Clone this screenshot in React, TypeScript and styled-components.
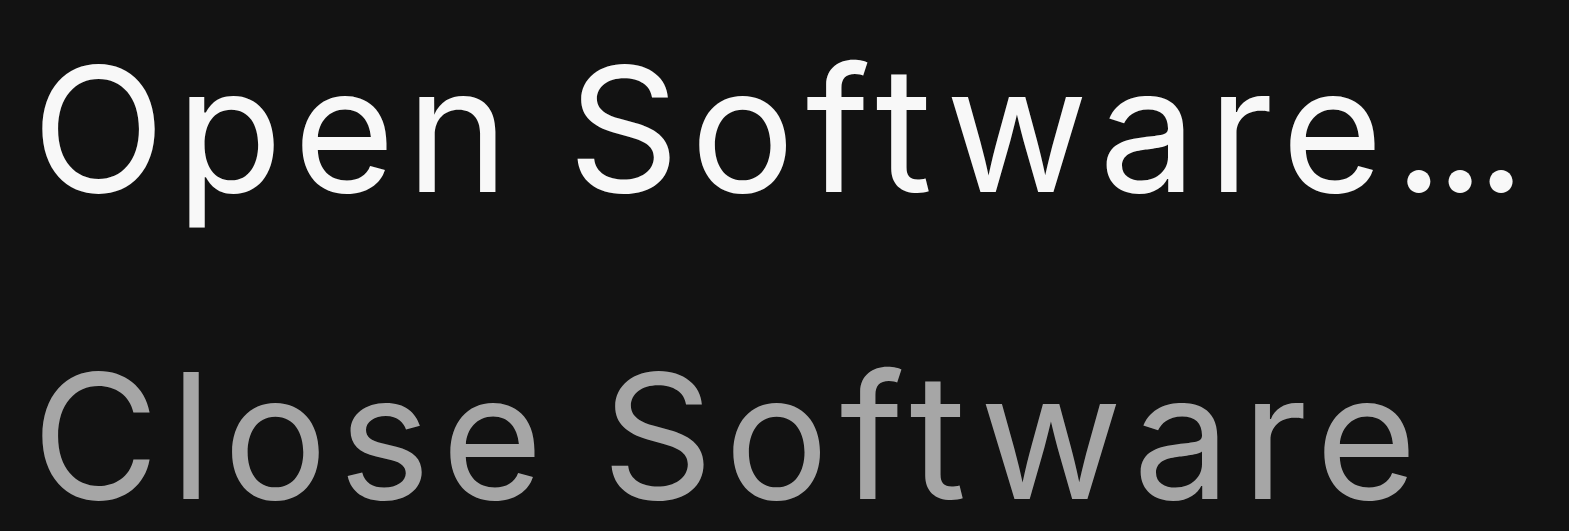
import React from 'react';
import styled, { createGlobalStyle } from 'styled-components';

const GlobalStyle = createGlobalStyle`
  html, body {
    margin: 0;
    padding: 0;
    background: #121212;
  }
  body {
    width: 1569px;
    height: 531px;
    overflow: hidden;
  }
`;

const Menu = styled.ul`
  list-style: none;
  margin: 0;
  padding: 0 0 0 32px;
  width: 1569px;
  height: 531px;
  box-sizing: border-box;
  background: #121212;
  display: flex;
  flex-direction: column;
  font-family: Inter, "Noto Sans", sans-serif;
`;

const MenuItem = styled.li<{ $disabled?: boolean }>`
  height: 307px;
  line-height: 1;
  font-size: 174px;
  letter-spacing: 11px;
  word-spacing: -12px;
  white-space: nowrap;
  color: ${(p) => (p.$disabled ? '#a6a6a6' : '#f8f8f8')};
  cursor: ${(p) => (p.$disabled ? 'default' : 'pointer')};
  padding-top: 42px;
  box-sizing: border-box;

  &:last-child {
    height: auto;
  }
`;

// the dots of the ellipsis sit tighter than the letters
const Dots = styled.span`
  letter-spacing: -9px;
`;

const App: React.FC = () => {
  return (
    <>
      <GlobalStyle />
      <Menu>
        <MenuItem>
          Open Software<Dots>...</Dots>
        </MenuItem>
        <MenuItem $disabled>Close Software</MenuItem>
      </Menu>
    </>
  );
};

export default App;
